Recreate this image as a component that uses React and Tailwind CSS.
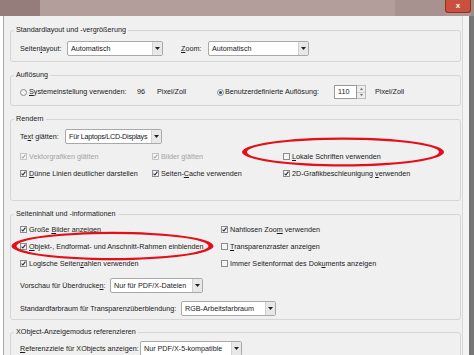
import React from 'react';

// Small pieces of the preferences dialog

const Box = ({on, disabled}) => (
  <span
    className={
      disabled
        ? 'flex items-center justify-center w-[7px] h-[7px] border border-[#c4c4c4] bg-[#f6f6f6] shrink-0'
        : 'flex items-center justify-center w-[7px] h-[7px] border border-[#8c8c8c] bg-[#f4f4f4] shrink-0'
    }
  >
    {on && (
      <svg width="5" height="5" viewBox="0 0 5 5">
        <path d="M0.6 2.6 L1.9 4 L4.4 0.7" fill="none" stroke={disabled ? '#a8a8a8' : '#1c2a48'} strokeWidth="1.1" />
      </svg>
    )}
  </span>
);

const Check = ({on, disabled, children}) => (
  <div className={disabled ? 'flex items-center gap-[2px] text-[#a3a3a3]' : 'flex items-center gap-[2px]'}>
    <Box on={on} disabled={disabled} />
    <span className="whitespace-nowrap">{children}</span>
  </div>
);

const Radio = ({on}) => (
  <span className="flex items-center justify-center w-[7px] h-[7px] rounded-full border border-[#8c8c8c] bg-[#f2f2f2] shrink-0">
    {on && <span className="w-[3px] h-[3px] rounded-full bg-[#2f4f7a]" />}
  </span>
);

const Sel = ({className, children}) => (
  <div className={'flex items-stretch shrink-0 h-[15px] border border-[#a9a9a9] rounded-[2px] bg-white ' + className}>
    <span className="flex-1 flex items-center pl-[3px] whitespace-nowrap overflow-hidden">{children}</span>
    <span className="w-[10px] flex items-center justify-center bg-[#e8e8e8] border-l border-[#d2d2d2]">
      <svg width="5" height="3" viewBox="0 0 5 3"><path d="M0 0h5L2.5 3z" fill="#222" /></svg>
    </span>
  </div>
);

const Group = ({title, className, children}) => (
  <fieldset className={'border border-[#d6d6d6] rounded-[3px] p-0 m-0 ' + className}>
    <legend className="ml-[3px] px-[2px] leading-[10px] whitespace-nowrap">{title}</legend>
    <div className="pl-[9px]">{children}</div>
  </fieldset>
);

export default function App() {
  return (
    <div className="relative w-[474px] h-[355px] overflow-hidden bg-[#f0f0f0] text-[7.2px] leading-[10px] text-[#1a1a1a] font-['Liberation_Sans',Arial,sans-serif]">
      {/* blurred window title bar */}
      <div className="flex h-[16px] bg-[#ad9794]">
        <div className="w-[40px] bg-[#947d7a]" />
        <div className="flex-1 bg-[#b39e9b]" />
        <div className="w-[50px] bg-[#a8928f]" />
        <div className="flex items-center justify-center w-[26px] h-[13px] rounded-b-[3px] border border-t-0 border-[#8e3024] bg-[#c9503f] text-white text-[8px] font-bold">
          x
        </div>
        <div className="w-[3px] bg-[#a08a86]" />
      </div>

      <div className="flex h-[339px]">
        <div className="w-[4px] bg-white border-r border-[#a9a9a9]" />

        <div className="flex-1 pl-[6px] pr-[1px] pt-[9px]">
          <Group title="Standardlayout und -vergrößerung" className="">
            <div className="flex items-center pt-[6px] pb-[5px] whitespace-nowrap">
              <span className="w-[47px] shrink-0">Seiten<u>l</u>ayout:</span>
              <Sel className="w-[96px]">Automatisch</Sel>
              <span className="ml-[18px] w-[27px] shrink-0"><u>Z</u>oom:</span>
              <Sel className="w-[101px]">Automatisch</Sel>
            </div>
          </Group>

          <Group title="Auflösung" className="mt-[8px]">
            <div className="flex items-center h-[14px] mt-[5px] mb-[6px] whitespace-nowrap">
              <Radio />
              <span className="ml-[2px] w-[108px] shrink-0"><u>S</u>ystemeinstellung verwenden:</span>
              <span className="w-[20px] shrink-0">96</span>
              <span className="w-[60px] shrink-0">Pixel/Zoll</span>
              <Radio on />
              <span className="ml-[1px] w-[109px] shrink-0">Benutzerdefinierte Auflösung:</span>
              <span className="flex items-center w-[23px] h-[14px] border border-[#9a9a9a] bg-white pl-[3px] shrink-0">110</span>
              <span className="flex flex-col w-[9px] h-[14px] border border-l-0 border-[#bdbdbd] bg-[#ececec] shrink-0">
                <span className="flex-1 flex items-center justify-center border-b border-[#cfcfcf]">
                  <svg width="3" height="2" viewBox="0 0 3 2"><path d="M0 2h3L1.5 0z" fill="#666" /></svg>
                </span>
                <span className="flex-1 flex items-center justify-center">
                  <svg width="3" height="2" viewBox="0 0 3 2"><path d="M0 0h3L1.5 2z" fill="#666" /></svg>
                </span>
              </span>
              <span className="ml-[9px]">Pixel/Zoll</span>
            </div>
          </Group>

          <Group title="Rendern" className="mt-[8px]">
            <div className="flex items-center mt-[5px] whitespace-nowrap">
              <span className="w-[45px] shrink-0">Te<u>x</u>t glätten:</span>
              <Sel className="w-[97px]"><span className="tracking-[-0.25px]">Für Laptops/LCD-Displays</span></Sel>
            </div>
            <div className="grid grid-cols-[132px_131px_1fr] mt-[4px] mb-[18px]">
              <div className="h-[17px] flex items-center"><Check on disabled>Vektorgrafiken glätten</Check></div>
              <div className="h-[17px] flex items-center"><Check on disabled>Bilder glätten</Check></div>
              <div className="h-[17px] flex items-center"><Check><u>L</u>okale Schriften verwenden</Check></div>
              <div className="h-[17px] flex items-center"><Check on><u>D</u>ünne Linien deutlicher darstellen</Check></div>
              <div className="h-[17px] flex items-center"><Check on>Seiten-<u>C</u>ache verwenden</Check></div>
              <div className="h-[17px] flex items-center"><Check on>2D-Grafikbeschleunigung <u>v</u>erwenden</Check></div>
            </div>
          </Group>

          <Group title="Seiteninhalt und -informationen" className="mt-[8px]">
            <div className="grid grid-cols-[201px_1fr] mt-[2px]">
              <div className="h-[17px] flex items-center"><Check on>Große <u>B</u>ilder anzeigen</Check></div>
              <div className="h-[17px] flex items-center"><Check on>Nahtlosen Zoo<u>m</u> verwenden</Check></div>
              <div className="h-[17px] flex items-center"><Check on><u>O</u>bjekt-, Endformat- und Anschnitt-Rahmen einblenden</Check></div>
              <div className="h-[17px] flex items-center"><Check><u>T</u>ransparenzraster anzeigen</Check></div>
              <div className="h-[17px] flex items-center"><Check on>Logische Seiten<u>z</u>ahlen verwenden</Check></div>
              <div className="h-[17px] flex items-center"><Check>Immer Seitenformat des Dok<u>u</u>ments anzeigen</Check></div>
            </div>
            <div className="flex items-center mt-[6px] whitespace-nowrap">
              <span className="w-[90px] shrink-0">Vorschau für Überdrucke<u>n</u>:</span>
              <Sel className="w-[93px]">Nur für PDF/X-Dateien</Sel>
            </div>
            <div className="flex items-center mt-[8px] mb-[3px] whitespace-nowrap">
              <span className="w-[161px] shrink-0">Standardfarbraum für Transparenzüberblendung:</span>
              <Sel className="w-[95px]">RGB-Arbeitsfarbraum</Sel>
            </div>
          </Group>

          <Group title="XObject-Anzeigemodus referenzieren" className="mt-[7px] h-[60px]">
            <div className="flex items-center mt-[4px] whitespace-nowrap">
              <span className="w-[120px] shrink-0"><u>R</u>eferenzziele für XObjects anzeigen:</span>
              <Sel className="w-[102px]">Nur PDF/X-5-kompatible</Sel>
            </div>
          </Group>
        </div>

        <div className="flex w-[12px]">
          <div className="w-[7px] border-l border-[#d9d9d9] bg-[#f3f3f3]" />
          <div className="w-[5px] bg-[#777777]" />
        </div>
      </div>

      {/* red hand-drawn highlight rings */}
      <svg className="absolute inset-0 pointer-events-none" width="474" height="355" viewBox="0 0 474 355">
        <path
          fillRule="evenodd"
          fill="#e2101a"
          d="M242,152 a101,14.5 0 1,0 202,0 a101,14.5 0 1,0 -202,0Z M247,152 a96,12.3 0 1,0 192,0 a96,12.3 0 1,0 -192,0Z"
        />
        <path
          fillRule="evenodd"
          fill="#e2101a"
          d="M11.5,246 a101,14.2 0 1,0 202,0 a101,14.2 0 1,0 -202,0Z M16.5,246 a96,12 0 1,0 192,0 a96,12 0 1,0 -192,0Z"
        />
      </svg>
    </div>
  );
}
